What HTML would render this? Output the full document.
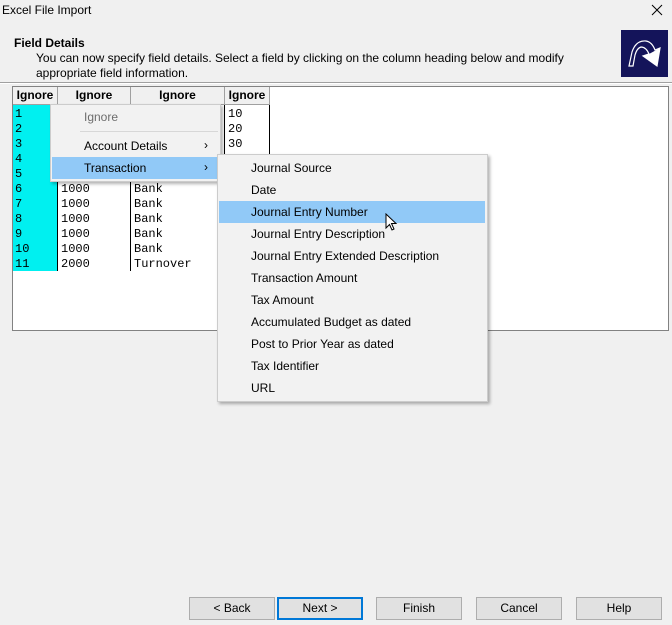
<!DOCTYPE html>
<html><head><style>
*{margin:0;padding:0;box-sizing:border-box}
body{width:672px;height:625px;background:#f0f0f0;font-family:"Liberation Sans",sans-serif;font-size:12px;color:#000;position:relative;overflow:hidden}
.a{position:absolute;white-space:nowrap}
.hdr{position:absolute;top:87px;height:18px;border-right:1px solid #a0a0a0;border-bottom:1px solid #a0a0a0;font-weight:bold;text-align:center;line-height:17px;background:#f0f0f0;font-size:12px}
.mono{font-family:"Liberation Mono",monospace;font-size:12px}
.btn{position:absolute;top:597px;width:86px;height:23px;border:1px solid #adadad;background:#e1e1e1;text-align:center;line-height:21px;font-size:12px}
.mi{position:absolute;left:251px;font-size:12px}
</style></head><body>
<div class="a" style="left:2px;top:3px;font-size:12px">Excel File Import</div>
<svg class="a" style="left:651px;top:4px" width="12" height="12" viewBox="0 0 12 12"><path d="M1 1 L11 11 M11 1 L1 11" stroke="#000" stroke-width="1"/></svg>
<div class="a" style="left:14px;top:36px;font-weight:bold">Field Details</div>
<div class="a" style="left:36px;top:51px">You can now specify field details. Select a field by clicking on the column heading below and modify</div>
<div class="a" style="left:36px;top:66px">appropriate field information.</div>
<svg class="a" style="left:621px;top:30px" width="47" height="47" viewBox="0 0 47 47"><rect width="47" height="47" fill="#14145a"/><path d="M8 36 L11 22 Q15 10 25 11 Q31 12 34 20 L39 18 L36 36 L22 26 L28 24 Q25 17 20 17 Q16 18 14 25 L12 36 Z" fill="none" stroke="#fff" stroke-width="1.2"/><path d="M28 24 L39 18 L36 36 L22 26 Z" fill="#fff"/></svg>
<div class="a" style="left:0;top:82px;width:672px;border-top:1px solid #a0a0a0;border-bottom:1px solid #fff"></div>
<div class="a" style="left:12px;top:86px;width:657px;height:245px;background:#fff;border:1px solid #828282"></div>
<div class="hdr" style="left:13px;width:45px">Ignore</div>
<div class="hdr" style="left:58px;width:73px">Ignore</div>
<div class="hdr" style="left:131px;width:94px">Ignore</div>
<div class="hdr" style="left:225px;width:45px">Ignore</div>
<div class="a" style="left:13px;top:105px;width:44px;height:166px;background:#00f0f0"></div>
<div class="a" style="left:130px;top:105px;height:166px;border-left:1px solid #000"></div>
<div class="a" style="left:224px;top:105px;height:166px;border-left:1px solid #000"></div>
<div class="a" style="left:269px;top:105px;height:166px;border-left:1px solid #000"></div>
<div class="a" style="left:57px;top:105px;height:166px;border-left:1px solid #000"></div>
<div class="a mono" style="left:15px;top:107px;line-height:15px">1<br>2<br>3<br>4<br>5<br>6<br>7<br>8<br>9<br>10<br>11</div>
<div class="a mono" style="left:61px;top:182px;line-height:15px">1000<br>1000<br>1000<br>1000<br>1000<br>2000</div>
<div class="a mono" style="left:134px;top:182px;line-height:15px">Bank<br>Bank<br>Bank<br>Bank<br>Bank<br>Turnover</div>
<div class="a mono" style="left:228px;top:107px;line-height:15px">10<br>20<br>30</div>
<div class="a" style="left:50px;top:104px;width:171px;height:78px;background:#f2f2f2;border:1px solid #ccc;box-shadow:2px 2px 3px rgba(0,0,0,.3)"></div>
<div class="a" style="left:84px;top:110px;color:#6d6d6d">Ignore</div>
<div class="a" style="left:80px;top:131px;width:138px;border-top:1px solid #d7d7d7"></div>
<div class="a" style="left:84px;top:139px">Account Details</div>
<div class="a" style="left:204px;top:138px">›</div>
<div class="a" style="left:52px;top:157px;width:167px;height:22px;background:#91c9f7"></div>
<div class="a" style="left:84px;top:161px">Transaction</div>
<div class="a" style="left:204px;top:160px">›</div>
<div class="a" style="left:217px;top:154px;width:271px;height:248px;background:#f2f2f2;border:1px solid #ccc;box-shadow:2px 2px 3px rgba(0,0,0,.3)"></div>
<div class="a" style="left:219px;top:201px;width:266px;height:22px;background:#91c9f7"></div>
<div class="mi" style="top:161px">Journal Source</div>
<div class="mi" style="top:183px">Date</div>
<div class="mi" style="top:205px">Journal Entry Number</div>
<div class="mi" style="top:227px">Journal Entry Description</div>
<div class="mi" style="top:249px">Journal Entry Extended Description</div>
<div class="mi" style="top:271px">Transaction Amount</div>
<div class="mi" style="top:293px">Tax Amount</div>
<div class="mi" style="top:315px">Accumulated Budget as dated</div>
<div class="mi" style="top:337px">Post to Prior Year as dated</div>
<div class="mi" style="top:359px">Tax Identifier</div>
<div class="mi" style="top:381px">URL</div>
<svg class="a" style="left:385px;top:213px" width="14" height="20" viewBox="0 0 14 20"><path d="M1 1 L1 15 L4.5 11.5 L7 17 L9 16 L6.5 10.5 L11 10.5 Z" fill="#fff" stroke="#000"/></svg>
<div class="btn" style="left:189px">&lt; Back</div>
<div class="btn" style="left:277px;border:2px solid #0078d7;line-height:19px">Next &gt;</div>
<div class="btn" style="left:376px">Finish</div>
<div class="btn" style="left:476px">Cancel</div>
<div class="btn" style="left:576px">Help</div>
</body></html>
